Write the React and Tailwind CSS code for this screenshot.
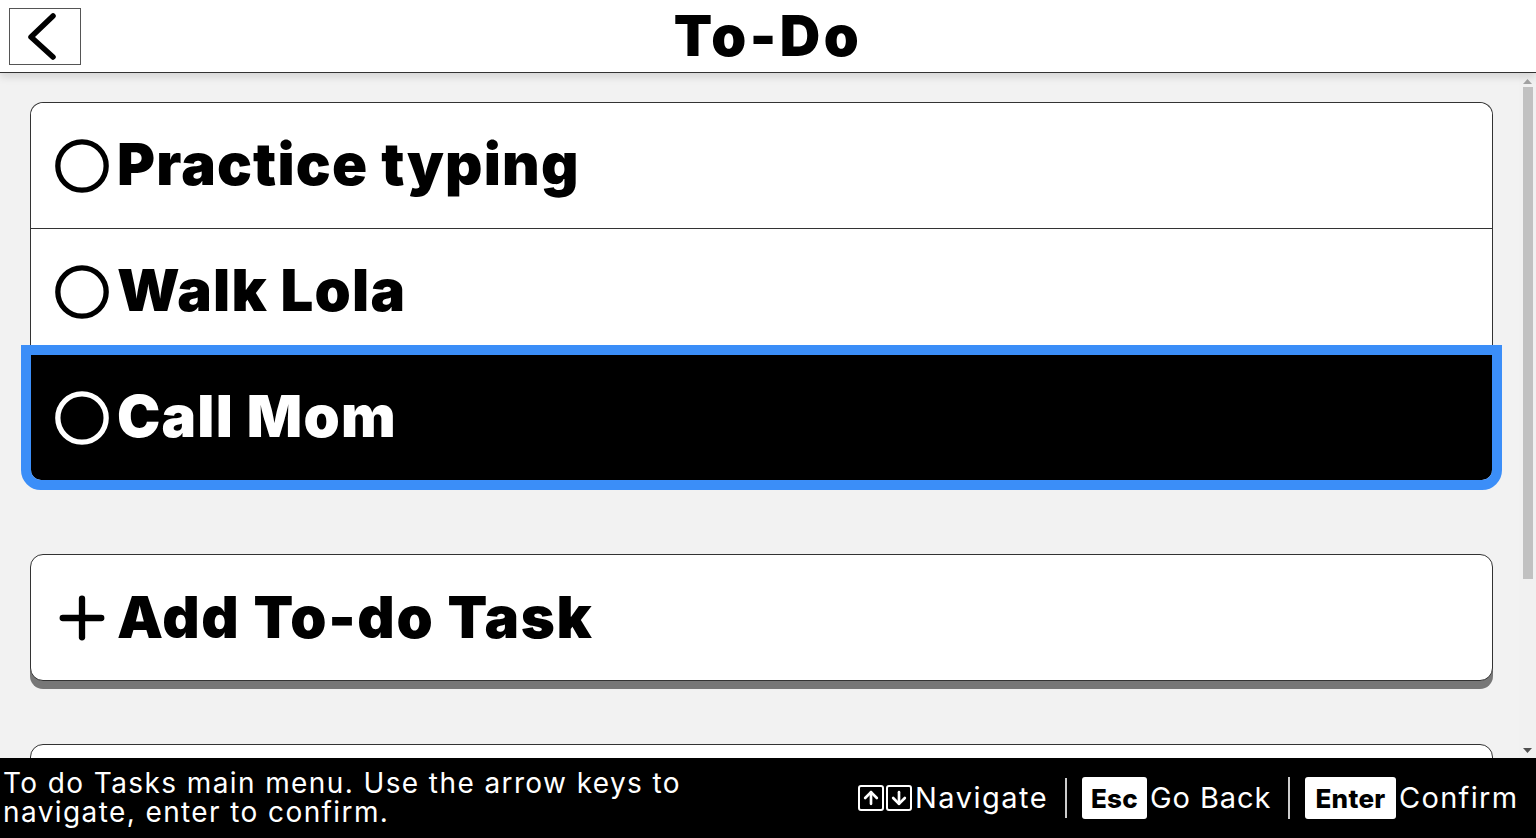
import { Circle, Plus, ArrowUp, ArrowDown } from "lucide-react";

const tasks = ["Practice typing", "Walk Lola"];

function TaskRow({ label, selected }) {
  return (
    <div className={`flex items-center pl-5 ${selected ? "relative z-10 h-[125px] rounded-b-[10px] bg-black pl-5 text-white outline-[10px] outline-[#3b8ef8]" : "h-[126px] border-b border-[#333] bg-white"}`}>
      <div className="flex h-[62px] w-[62px] shrink-0 items-center justify-center">
        <Circle size={58} strokeWidth={2.2} className="shrink-0" />
      </div>
      <span className="mb-[3px] ml-[4px] whitespace-nowrap text-[58px] leading-none font-black tracking-[1.2px]">{label}</span>
    </div>
  );
}

function Key({ children, className }) {
  return (
    <span className={`flex h-[42px] items-center justify-center rounded-[3px] bg-white text-[26px] font-extrabold tracking-[0.3px] text-black ${className}`}>
      {children}
    </span>
  );
}

export default function App() {
  return (
    <div className="flex h-[838px] w-[1536px] flex-col overflow-hidden bg-[#f2f2f2] font-['Inter',sans-serif] text-black">
      <header className="relative z-20 flex h-[73px] shrink-0 items-center border-b border-[#333] bg-white shadow-[0_4px_8px_rgba(0,0,0,0.12)]">
        <button className="ml-[9px] flex h-[57px] w-[72px] items-center border border-[#555] bg-white pl-[18px]">
          <svg width="28" height="48" viewBox="0 0 28 48" fill="none" stroke="black" strokeWidth="5.5" strokeLinecap="round" strokeLinejoin="round">
            <path d="M25 4 L3 25 L25 45" />
          </svg>
        </button>
        <h1 className="absolute left-0 right-0 text-center text-[56px] leading-none font-black tracking-[3.5px]">To-Do</h1>
      </header>

      <main className="flex min-h-0 flex-1">
        <div className="min-w-0 flex-1 overflow-hidden pl-[30px] pr-[26px] pt-[29px]">
          <div className="rounded-[13px] border border-[#333] border-b-0 bg-white">
            <div className="overflow-hidden rounded-t-[13px]">
              {tasks.map((t) => (
                <TaskRow key={t} label={t} />
              ))}
            </div>
            <TaskRow label="Call Mom" selected />
          </div>

          <div className="mt-[74px] flex h-[127px] items-center rounded-[13px] border border-[#333] bg-white pl-5 shadow-[0_8px_0_#777]">
            <div className="flex h-[62px] w-[62px] shrink-0 items-center justify-center">
              <Plus size={66} strokeWidth={2.3} className="shrink-0" />
            </div>
            <span className="mb-[2px] ml-[4px] whitespace-nowrap text-[58px] leading-none font-black tracking-[1.6px]">Add To-do Task</span>
          </div>

          <div className="mt-[63px] h-[128px] rounded-[13px] border border-[#333] bg-white" />
        </div>

        <div className="flex w-[17px] shrink-0 flex-col items-center bg-[#f1f1f1]">
          <svg width="9" height="5" viewBox="0 0 9 5" className="mt-[6px]"><path d="M4.5 0 L9 5 L0 5 Z" fill="#a3a3a3" /></svg>
          <div className="mt-[3px] h-[492px] w-[10px] bg-[#c1c1c1]" />
          <svg width="9" height="5" viewBox="0 0 9 5" className="mt-auto mb-[5px]"><path d="M0 0 L9 0 L4.5 5 Z" fill="#505050" /></svg>
        </div>
      </main>

      <footer className="relative z-20 flex h-[80px] shrink-0 items-center bg-black pl-[3px] pr-[19px] text-white">
        <p className="w-[700px] text-[28px] leading-[29px] tracking-[1.4px]">To do Tasks main menu. Use the arrow keys to navigate, enter to confirm.</p>
        <div className="ml-auto flex items-center whitespace-nowrap text-[29px]">
          <span className="flex h-[26px] w-[26px] items-center justify-center rounded-[3px] border-2 border-white"><ArrowUp size={20} strokeWidth={3.2} /></span>
          <span className="ml-[2px] flex h-[26px] w-[26px] items-center justify-center rounded-[3px] border-2 border-white"><ArrowDown size={20} strokeWidth={3.2} /></span>
          <span className="ml-[3px] w-[132px] tracking-[1.5px]">Navigate</span>
          <span className="ml-[18px] mr-[15px] h-[40px] w-[2px] bg-[#ccc]" />
          <Key className="w-[65px]">Esc</Key>
          <span className="ml-[3px] w-[120px] tracking-[0.9px]">Go Back</span>
          <span className="ml-[18px] mr-[15px] h-[42px] w-[2px] bg-[#ccc]" />
          <Key className="w-[91px]">Enter</Key>
          <span className="ml-[3px] w-[118px] tracking-[1.3px]">Confirm</span>
        </div>
      </footer>
    </div>
  );
}
